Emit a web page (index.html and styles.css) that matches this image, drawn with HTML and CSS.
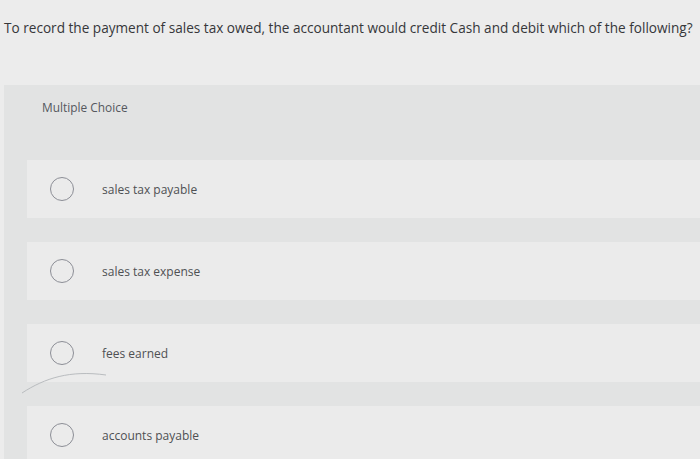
FILE: index.html
```html
<!DOCTYPE html>
<html lang="en">
<head>
<meta charset="utf-8">
<title>Multiple Choice</title>
<link rel="stylesheet" href="styles.css">
</head>
<body>
<div class="page">
  <p class="question">To record the payment of sales tax owed, the accountant would credit Cash and debit which of the following?</p>
  <section class="panel">
    <h2 class="panel-title">Multiple Choice</h2>
    <ul class="options">
      <li class="option"><span class="radio"></span><span class="label">sales tax payable</span></li>
      <li class="option"><span class="radio"></span><span class="label">sales tax expense</span></li>
      <li class="option"><span class="radio"></span><span class="label">fees earned</span></li>
      <li class="option"><span class="radio"></span><span class="label">accounts payable</span></li>
    </ul>
  </section>
  <svg class="scribble" width="120" height="40" viewBox="0 0 120 40"><path d="M22 33 C 45 18, 70 10, 106 15" fill="none" stroke="#b9bcbf" stroke-width="1"/></svg>
</div>
</body>
</html>
```
FILE: styles.css
```css
html, body {
  margin: 0;
  padding: 0;
  background: #ececec;
  font-family: "Open Sans", Lato, "Liberation Sans", sans-serif;
  overflow: hidden;
}
.page {
  position: relative;
  width: 700px;
  height: 459px;
}
.question {
  margin: 0;
  padding: 20px 0 0 4px;
  height: 85px;
  box-sizing: border-box;
  font-size: 13.6px;
  line-height: 16px;
  color: #36373a;
  white-space: nowrap;
}
.panel {
  margin-left: 4px;
  background: #e2e3e3;
  padding-top: 14px;
  height: 374px;
  box-sizing: border-box;
}
.panel-title {
  margin: 0 0 0 38px;
  font-size: 11.9px;
  font-weight: normal;
  line-height: 16px;
  color: #55585e;
}
.options {
  list-style: none;
  margin: 45px 0 0 23px;
  padding: 0;
  display: flex;
  flex-direction: column;
  gap: 24px;
}
.option {
  height: 58px;
  background: #ebebeb;
  display: flex;
  align-items: center;
  padding-left: 23px;
}
.radio {
  width: 22px;
  height: 22px;
  border: 1.5px solid #8c8e96;
  border-radius: 50%;
  flex: none;
}
.label {
  margin-left: 28px;
  font-size: 12px;
  color: #4e5053;
}
.scribble {
  position: absolute;
  left: 0;
  top: 360px;
}
```
